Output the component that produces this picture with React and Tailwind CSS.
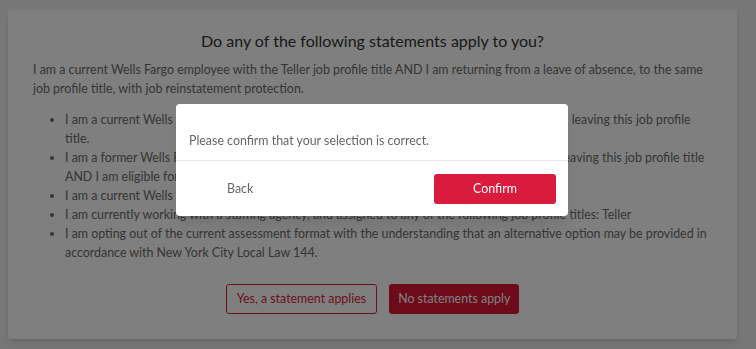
import React from "react";

const statements = [
  "I am a current Wells Fargo employee with the Teller job profile title AND I am not planning on leaving this job profile title.",
  "I am a former Wells Fargo employee who had a Teller job profile title in the past year before leaving this job profile title AND I am eligible for rehire.",
  "I am a current Wells Fargo contractor working as a Teller.",
  "I am currently working with a staffing agency, and assigned to any of the following job profile titles: Teller",
  "I am opting out of the current assessment format with the understanding that an alternative option may be provided in accordance with New York City Local Law 144.",
];

export default function App() {
  return (
    <div className="relative min-h-screen bg-[#eeeeee] px-2 py-[10px] font-['Lato','Liberation_Sans',sans-serif]">
      {/* QUESTION CARD */}
      <div className="w-[729px] bg-white rounded-[3px] shadow-md px-[25px] pt-[19px] pb-[25px]">
        <h1 className="text-center text-[16px] text-[#333] leading-[24px] mb-[7px]">
          Do any of the following statements apply to you?
        </h1>
        <p className="text-[12.4px] leading-[19px] text-[#6a6a6a]">
          I am a current Wells Fargo employee with the Teller job profile title AND I am returning from a leave of absence, to the same job profile title, with job reinstatement protection.
        </p>
        <ul className="list-disc pl-[32px] mt-[12px] text-[12.4px] leading-[19px] text-[#6a6a6a]">
          {statements.map((s) => (
            <li key={s}>{s}</li>
          ))}
        </ul>
        <div className="flex justify-center gap-3 mt-[22px]">
          <button className="h-[30px] px-[10px] rounded-[3px] border border-[#d71e3c] text-[#d71e3c] text-[12.4px] bg-white">
            Yes, a statement applies
          </button>
          <button className="h-[30px] px-[9px] rounded-[3px] bg-[#dc1636] text-white text-[12.4px]">
            No statements apply
          </button>
        </div>
      </div>

      {/* OVERLAY */}
      <div className="fixed inset-0 bg-black/50" />

      {/* CONFIRM DIALOG */}
      <div className="absolute left-[176px] top-[104px] w-[392px] bg-white rounded-[4px] shadow-lg">
        <div className="h-[56px] pt-[27px] px-[13px] text-[12.4px] leading-[19px] text-[#666]">
          Please confirm that your selection is correct.
        </div>
        <div className="border-t border-[#e6e8ec] h-[56px] pt-[13px] flex items-start justify-between pl-[51px] pr-[12px]">
          <button className="h-[30px] text-[12.4px] text-[#666]">Back</button>
          <button className="w-[122px] h-[30px] rounded-[3px] bg-[#d91b3d] text-white text-[12.4px]">
            Confirm
          </button>
        </div>
      </div>
    </div>
  );
}
